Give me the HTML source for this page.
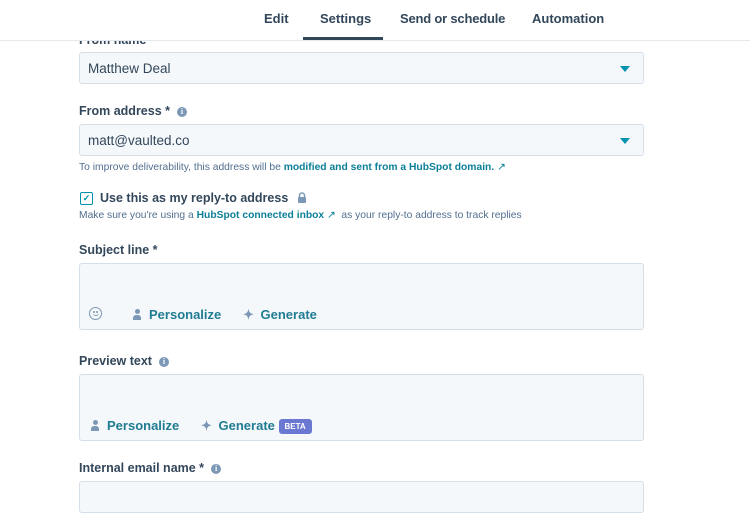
<!DOCTYPE html>
<html><head><meta charset="utf-8"><style>
*{margin:0;padding:0;box-sizing:border-box}
body{width:750px;height:523px;overflow:hidden;background:#fff;font-family:"Liberation Sans",sans-serif;color:#33475b;position:relative}
.a{position:absolute;white-space:nowrap}
.hdr{position:absolute;left:0;top:0;width:750px;height:41px;background:#fff;border-bottom:1px solid #e5e8ed;z-index:2}
.tab{position:absolute;top:11px;font-size:13px;font-weight:bold;color:#33475b}
.box{position:absolute;left:79px;width:565px;background:#f5f8fa;border:1px solid #d6dfe8;border-radius:3px}
.lbl{position:absolute;left:79px;font-size:12.5px;font-weight:bold;color:#33475b}
.info{display:inline-block;width:10px;height:10px;border-radius:50%;background:#7c98b6;color:#fff;font-size:8px;text-align:center;line-height:10px;font-weight:bold;vertical-align:1px;margin-left:7px;font-family:"Liberation Serif",serif}
.caret{position:absolute;right:13px;top:13px;width:0;height:0;border-left:5px solid transparent;border-right:5px solid transparent;border-top:6px solid #0091ae}
.sm{position:absolute;left:79px;font-size:10.3px;color:#516f90}
.lk{color:#0b7f98;font-weight:bold}
.act{position:absolute;font-size:13px;font-weight:bold;color:#1f7c93}
.per{display:inline-block;position:relative;width:10px;height:11px;margin-right:7px;vertical-align:-1px}
.per:before{content:"";position:absolute;left:2.5px;top:0;width:5px;height:5px;border-radius:50%;background:#7c98b6}
.per:after{content:"";position:absolute;left:1px;top:6px;width:8px;height:5px;border-radius:3px 3px 0 0;background:#7c98b6}
</style></head><body>
<div class="hdr">
<div class="tab" style="left:264px">Edit</div>
<div class="tab" style="left:320px">Settings</div>
<div class="tab" style="left:400px;letter-spacing:-0.2px">Send or schedule</div>
<div class="tab" style="left:532px">Automation</div>
<div style="position:absolute;left:303px;top:37px;width:80px;height:3px;background:#33475b"></div>
</div>
<div class="lbl" style="top:33px">From name *</div>
<div class="box" style="top:52px;height:32px"><span class="a" style="left:8px;top:8px;font-size:13.5px">Matthew Deal</span><div class="caret"></div></div>
<div class="lbl" style="top:104px">From address *<span class="info">i</span></div>
<div class="box" style="top:124px;height:32px"><span class="a" style="left:8px;top:8px;font-size:13.5px">matt@vaulted.co</span><div class="caret"></div></div>
<div class="sm" style="top:161px">To improve deliverability, this address will be <span class="lk">modified and sent from a HubSpot domain.</span> <span style="color:#0b7f98">↗</span></div>
<div class="a" style="left:80px;top:192px;width:13px;height:13px;border:1.5px solid #0091ae;border-radius:2px;font-size:9px;color:#0091ae;text-align:center;line-height:10px;font-weight:bold">✓</div>
<div class="a" style="left:100px;top:191px;font-size:12.5px;font-weight:bold">Use this as my reply-to address
<svg width="10" height="11" viewBox="0 0 10 11" style="margin-left:5px;vertical-align:-1px"><path d="M2.5 5V3.5a2.5 2.5 0 0 1 5 0V5" fill="none" stroke="#7c98b6" stroke-width="1.5"/><rect x="1" y="5" width="8" height="6" rx="1" fill="#7c98b6"/></svg></div>
<div class="sm" style="top:209px">Make sure you're using a <span class="lk">HubSpot connected inbox</span> <span style="color:#0b7f98">↗</span>&nbsp; as your reply-to address to track replies</div>
<div class="lbl" style="top:243px">Subject line *</div>
<div class="box" style="top:263px;height:67px">
<span class="a" style="left:9px;top:43px;width:13px;height:13px;border:1.3px solid #7c98b6;border-radius:50%"><span style="position:absolute;left:2.5px;top:3px;width:2px;height:2px;background:#7c98b6;border-radius:50%"></span><span style="position:absolute;left:6px;top:3px;width:2px;height:2px;background:#7c98b6;border-radius:50%"></span><span style="position:absolute;left:2.5px;top:5px;width:6px;height:3px;border-bottom:1.2px solid #7c98b6;border-radius:0 0 3px 3px"></span></span>
<span class="act" style="left:52px;top:43px"><span class="per"></span>Personalize</span>
<span class="act" style="left:163px;top:43px"><span style="color:#7c98b6;margin-right:3px">✦</span> Generate</span>
</div>
<div class="lbl" style="top:354px">Preview text<span class="info">i</span></div>
<div class="box" style="top:374px;height:67px">
<span class="act" style="left:10px;top:43px"><span class="per"></span>Personalize</span>
<span class="act" style="left:121px;top:43px"><span style="color:#7c98b6;margin-right:3px">✦</span> Generate <span style="display:inline-block;background:#6a78d1;color:#fff;font-size:8px;padding:3px 6px;border-radius:3px;vertical-align:1px">BETA</span></span>
</div>
<div class="lbl" style="top:461px">Internal email name *<span class="info">i</span></div>
<div class="box" style="top:481px;height:32px"></div>
</body></html>
